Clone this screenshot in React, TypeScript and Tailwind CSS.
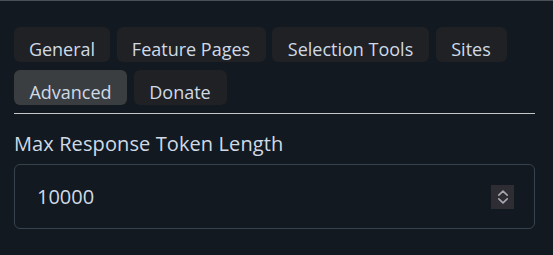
import React from "react";

const tabs = [
  { label: "General", w: "w-[96px]" },
  { label: "Feature Pages", w: "w-[149px]" },
  { label: "Selection Tools", w: "w-[157px]" },
  { label: "Sites", w: "w-[71px]" },
  { label: "Advanced", w: "w-[113px]", active: true },
  { label: "Donate", w: "w-[93px]" },
];

export default function App() {
  return (
    <div
      className="w-[553px] h-[255px] bg-[#121920] border-t border-[#4b5058] pl-[14px] pr-[18px] pt-[26px] text-[#cfdae6] overflow-hidden"
      style={{ fontFamily: '"Open Sans", "Noto Sans", sans-serif' }}
    >
      <div className="flex flex-wrap gap-x-[6.5px] gap-y-[8px]">
        {tabs.map((t) => (
          <div
            key={t.label}
            className={`${t.w} h-[35px] pt-[10px] rounded-[6px] text-[18px] leading-[24px] flex justify-center whitespace-nowrap ${
              t.active ? "bg-[#3b3e41]" : "bg-[#1f2124]"
            }`}
          >
            {t.label}
          </div>
        ))}
      </div>
      <div className="mt-[8px] h-px bg-[#c4c6c8]" />
      <div className="mt-[16px] text-[20px] leading-[28px] tracking-[0.1px]">Max Response Token Length</div>
      <div className="mt-[6px] h-[65px] border border-[#36434d] rounded-[6px] flex items-center pl-[22px] pr-[20px]">
        <span className="flex-1 text-[20px] leading-[28px]">10000</span>
        <div className="w-[23px] h-[24px] bg-[#2f2d34] flex items-center justify-center">
          <svg width="12" height="14" viewBox="0 0 12 14" fill="none" stroke="#a9a6b1" strokeWidth="1.6" strokeLinecap="round" strokeLinejoin="round">
            <path d="M1.8 5.2 L6 1.2 L10.2 5.2" />
            <path d="M1.8 8.8 L6 12.8 L10.2 8.8" />
          </svg>
        </div>
      </div>
    </div>
  );
}
